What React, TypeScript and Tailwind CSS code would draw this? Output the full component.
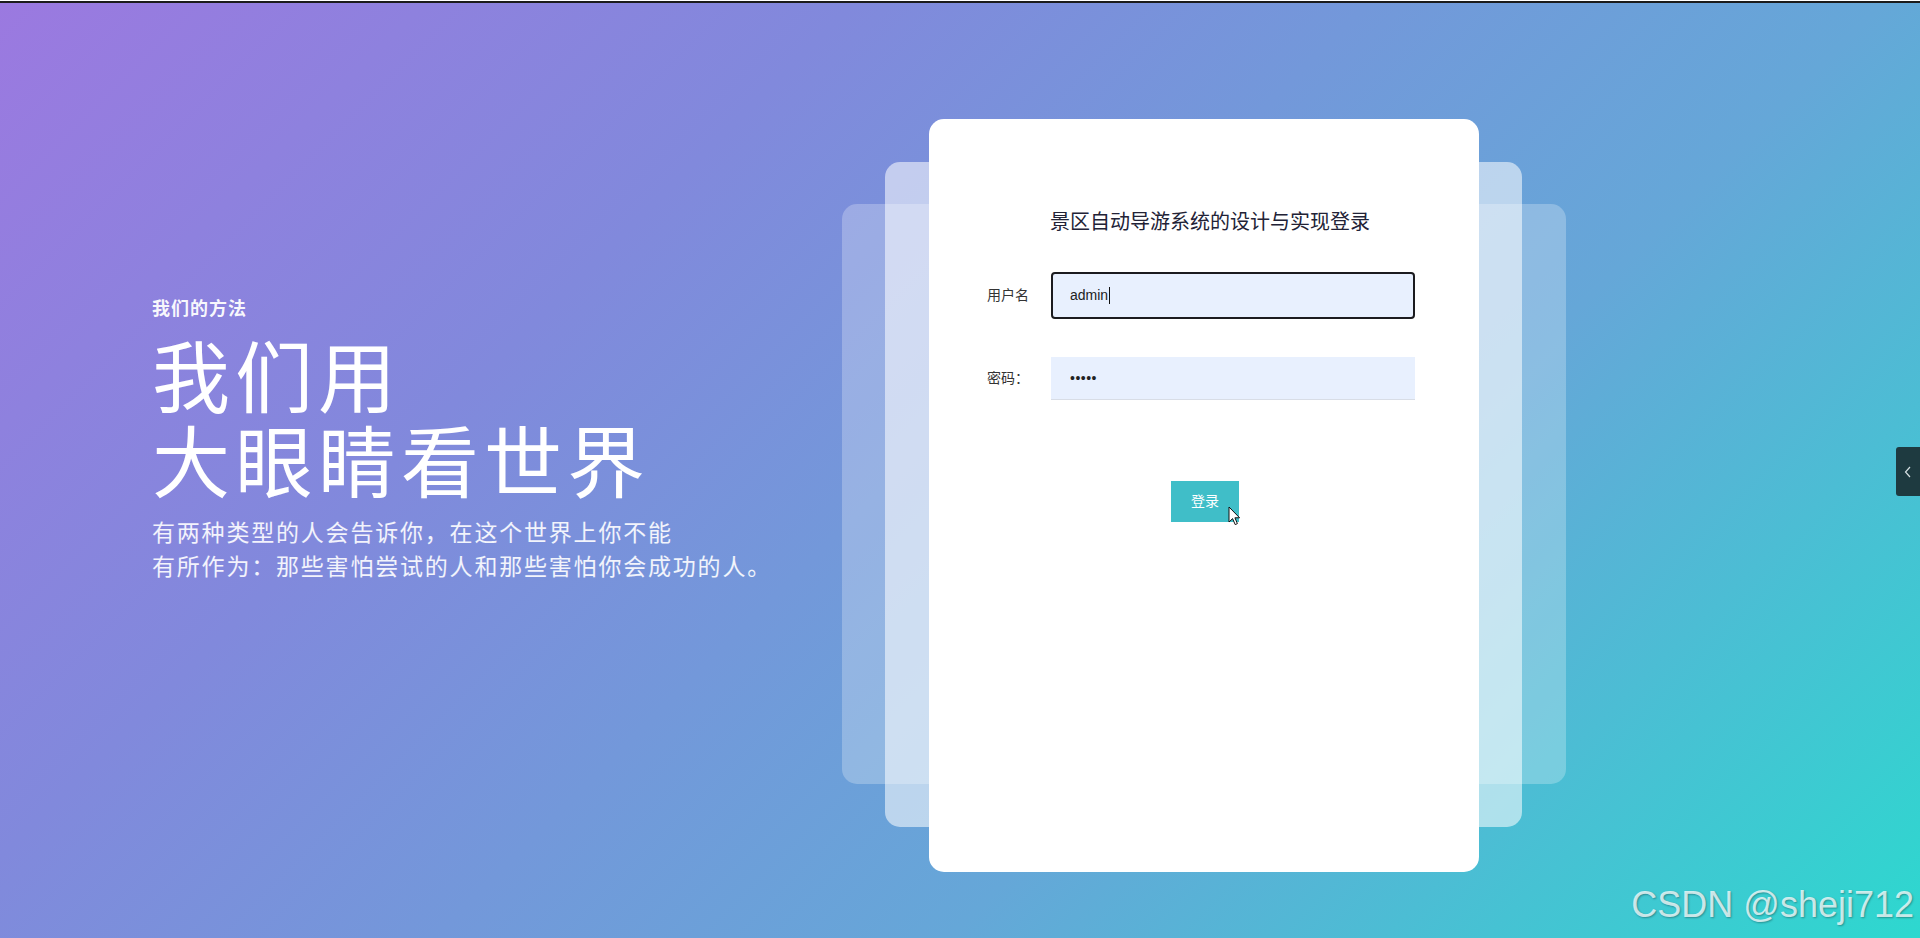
import React from "react";

function Cursor() {
  return (
    <svg
      className="absolute left-[57px] top-[25px]"
      width="13"
      height="20"
      viewBox="0 0 13 20"
    >
      <path
        d="M1 1 L1 16 L4.6 12.6 L7.2 18.6 L9.4 17.6 L6.9 11.8 L11.6 11.8 Z"
        fill="#ffffff"
        stroke="#111111"
        strokeWidth="1"
        strokeLinejoin="round"
      />
    </svg>
  );
}

export default function App() {
  return (
    <div className="relative h-[938px] w-full overflow-hidden bg-[linear-gradient(135deg,#9b79e0_0%,#8189dc_30%,#65a7d8_66%,#2dd8cf_100%)] font-['Liberation_Sans','Noto_Sans_CJK_SC',sans-serif]">
      <div className="absolute inset-x-0 top-0 h-[3px] border-t border-white bg-[#1c1c1c]" />

      <div className="flex h-full">
        {/* left text */}
        <div className="ml-[152px] mt-[294px] w-[720px] text-white font-['Noto_Sans_CJK_SC',sans-serif]">
          <div className="text-[18px] font-bold leading-[26px] tracking-[1px] text-white/95">我们的方法</div>
          <h1 className="mt-[11px] text-[78px] font-normal leading-[85px] tracking-[5px]">
            我们用
            <br />
            大眼睛看世界
          </h1>
          <p className="mt-[13px] text-[23px] leading-[34px] tracking-[1.8px] text-white/90">
            有两种类型的人会告诉你，在这个世界上你不能
            <br />
            有所作为：那些害怕尝试的人和那些害怕你会成功的人。
          </p>
        </div>

        {/* card stack */}
        <div className="relative ml-[57px] mt-[119px] h-[753px] w-[550px]">
          <div className="absolute -left-[87px] -right-[87px] top-[85px] bottom-[88px] rounded-[15px] bg-white/25" />
          <div className="absolute -left-[44px] -right-[43px] top-[43px] bottom-[45px] rounded-[15px] bg-white/55" />
          <div className="relative flex h-full flex-col rounded-[15px] bg-white pt-[89px] font-['Liberation_Sans','Noto_Sans_CJK_SC',sans-serif]">
            <div className="pl-[12px] text-center text-[20px] leading-[28px] text-[#222236]">
              景区自动导游系统的设计与实现登录
            </div>

            <div className="mt-[36px] flex items-center pl-[58px]">
              <label className="w-[64px] text-[14px] text-[#333]">用户名</label>
              <div className="flex h-[47px] w-[364px] items-center rounded-[4px] border-2 border-[#1b1b1f] bg-[#e8f0fe] pl-[17px] text-[14px] text-[#222]">
                admin
                <span className="ml-[1px] inline-block h-[17px] w-[1px] bg-[#111]" />
              </div>
            </div>

            <div className="mt-[38px] flex items-center pl-[58px]">
              <label className="w-[64px] text-[14px] text-[#333]">密码：</label>
              <div className="flex h-[43px] w-[364px] items-center border-b border-[#d8dde6] bg-[#e8f0fe] pl-[19px] text-[14px] tracking-[0.5px] text-[#222]">
                •••••
              </div>
            </div>

            <div className="mt-[81px] flex justify-center pl-[2px]">
              <button className="relative h-[41px] w-[68px] bg-[#40bec8] text-[14px] text-white">
                登录
                <Cursor />
              </button>
            </div>
          </div>
        </div>
      </div>

      {/* right side tab */}
      <div className="absolute right-0 top-[447px] flex h-[49px] w-[24px] items-center justify-center rounded-l-[3px] bg-[#1e3a40]">
        <svg width="8" height="12" viewBox="0 0 8 12">
          <polyline points="6,1 1.5,6 6,11" fill="none" stroke="#d6e0e2" strokeWidth="1.2" />
        </svg>
      </div>

      {/* watermark */}
      <div className="absolute bottom-[13px] right-[6px] text-[36px] leading-[41px] text-white/75 [text-shadow:1px_1px_2px_rgba(0,0,0,0.3)] font-['Liberation_Sans',sans-serif]">
        CSDN @sheji712
      </div>
    </div>
  );
}
